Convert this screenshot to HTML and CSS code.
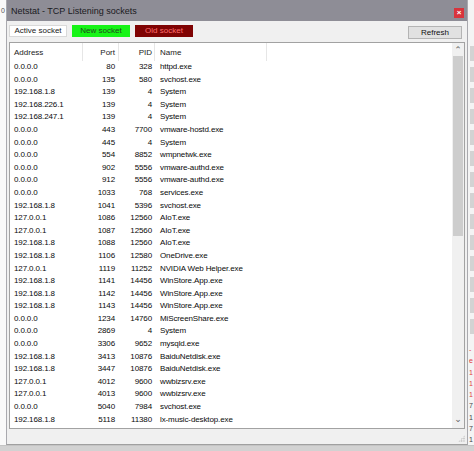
FILE: index.html
```html
<!DOCTYPE html>
<html>
<head>
<meta charset="utf-8">
<link rel="stylesheet" href="styles.css">
</head>
<body>
<div class="screen">
  <div class="desk">
    <div class="left-strip"><span class="peek">0</span></div>
    <div class="window">
      <div class="titlebar">
        <span class="title">Netstat - TCP Listening sockets</span>
        <span class="close">×</span>
      </div>
      <div class="toolbar">
        <span class="tag tag-active">Active socket</span>
        <span class="tag tag-new">New socket</span>
        <span class="tag tag-old">Old socket</span>
        <button class="refresh">Refresh</button>
      </div>
      <div class="list">
        <div class="grid">
          <div class="row head">
            <div class="c addr">Address</div><div class="c port">Port</div><div class="c pid">PID</div><div class="c name">Name</div><div class="c fill"></div>
          </div>
          <div class="row"><div class="c addr">0.0.0.0</div><div class="c port">80</div><div class="c pid">328</div><div class="c name">httpd.exe</div></div>
          <div class="row"><div class="c addr">0.0.0.0</div><div class="c port">135</div><div class="c pid">580</div><div class="c name">svchost.exe</div></div>
          <div class="row"><div class="c addr">192.168.1.8</div><div class="c port">139</div><div class="c pid">4</div><div class="c name">System</div></div>
          <div class="row"><div class="c addr">192.168.226.1</div><div class="c port">139</div><div class="c pid">4</div><div class="c name">System</div></div>
          <div class="row"><div class="c addr">192.168.247.1</div><div class="c port">139</div><div class="c pid">4</div><div class="c name">System</div></div>
          <div class="row"><div class="c addr">0.0.0.0</div><div class="c port">443</div><div class="c pid">7700</div><div class="c name">vmware-hostd.exe</div></div>
          <div class="row"><div class="c addr">0.0.0.0</div><div class="c port">445</div><div class="c pid">4</div><div class="c name">System</div></div>
          <div class="row"><div class="c addr">0.0.0.0</div><div class="c port">554</div><div class="c pid">8852</div><div class="c name">wmpnetwk.exe</div></div>
          <div class="row"><div class="c addr">0.0.0.0</div><div class="c port">902</div><div class="c pid">5556</div><div class="c name">vmware-authd.exe</div></div>
          <div class="row"><div class="c addr">0.0.0.0</div><div class="c port">912</div><div class="c pid">5556</div><div class="c name">vmware-authd.exe</div></div>
          <div class="row"><div class="c addr">0.0.0.0</div><div class="c port">1033</div><div class="c pid">768</div><div class="c name">services.exe</div></div>
          <div class="row"><div class="c addr">192.168.1.8</div><div class="c port">1041</div><div class="c pid">5396</div><div class="c name">svchost.exe</div></div>
          <div class="row"><div class="c addr">127.0.0.1</div><div class="c port">1086</div><div class="c pid">12560</div><div class="c name">AIoT.exe</div></div>
          <div class="row"><div class="c addr">127.0.0.1</div><div class="c port">1087</div><div class="c pid">12560</div><div class="c name">AIoT.exe</div></div>
          <div class="row"><div class="c addr">192.168.1.8</div><div class="c port">1088</div><div class="c pid">12560</div><div class="c name">AIoT.exe</div></div>
          <div class="row"><div class="c addr">192.168.1.8</div><div class="c port">1106</div><div class="c pid">12580</div><div class="c name">OneDrive.exe</div></div>
          <div class="row"><div class="c addr">127.0.0.1</div><div class="c port">1119</div><div class="c pid">11252</div><div class="c name">NVIDIA Web Helper.exe</div></div>
          <div class="row"><div class="c addr">192.168.1.8</div><div class="c port">1141</div><div class="c pid">14456</div><div class="c name">WinStore.App.exe</div></div>
          <div class="row"><div class="c addr">192.168.1.8</div><div class="c port">1142</div><div class="c pid">14456</div><div class="c name">WinStore.App.exe</div></div>
          <div class="row"><div class="c addr">192.168.1.8</div><div class="c port">1143</div><div class="c pid">14456</div><div class="c name">WinStore.App.exe</div></div>
          <div class="row"><div class="c addr">0.0.0.0</div><div class="c port">1234</div><div class="c pid">14760</div><div class="c name">MiScreenShare.exe</div></div>
          <div class="row"><div class="c addr">0.0.0.0</div><div class="c port">2869</div><div class="c pid">4</div><div class="c name">System</div></div>
          <div class="row"><div class="c addr">0.0.0.0</div><div class="c port">3306</div><div class="c pid">9652</div><div class="c name">mysqld.exe</div></div>
          <div class="row"><div class="c addr">192.168.1.8</div><div class="c port">3413</div><div class="c pid">10876</div><div class="c name">BaiduNetdisk.exe</div></div>
          <div class="row"><div class="c addr">192.168.1.8</div><div class="c port">3447</div><div class="c pid">10876</div><div class="c name">BaiduNetdisk.exe</div></div>
          <div class="row"><div class="c addr">127.0.0.1</div><div class="c port">4012</div><div class="c pid">9600</div><div class="c name">wwbizsrv.exe</div></div>
          <div class="row"><div class="c addr">127.0.0.1</div><div class="c port">4013</div><div class="c pid">9600</div><div class="c name">wwbizsrv.exe</div></div>
          <div class="row"><div class="c addr">0.0.0.0</div><div class="c port">5040</div><div class="c pid">7984</div><div class="c name">svchost.exe</div></div>
          <div class="row"><div class="c addr">192.168.1.8</div><div class="c port">5118</div><div class="c pid">11380</div><div class="c name">lx-music-desktop.exe</div></div>
        </div>
        <div class="vscroll">
          <div class="arrow">&#x2303;</div>
          <div class="track"><div class="thumb"></div></div>
          <div class="arrow down">&#x2304;</div>
        </div>
      </div>
      <div class="status"><span class="grip"></span></div>
    </div>
    <div class="right-strip">
      <div class="blocks">
        <span class="blk"></span><span class="blk"></span><span class="blk"></span><span class="blk"></span><span class="blk"></span><span class="blk"></span><span class="blk"></span><span class="blk"></span><span class="blk"></span><span class="blk"></span><span class="blk"></span><span class="blk"></span><span class="blk"></span><span class="blk"></span>
      </div>
      <div class="peek-lines">
        <span class="red">-</span><span class="red">e</span><span class="red">1</span><span class="red">1</span><span class="red">1</span><span class="dark">7</span><span class="dark">1</span><span class="dark">7</span><span class="dark">1</span>
      </div>
    </div>
  </div>
  <div class="bottom-strip"></div>
</div>
</body>
</html>
```

FILE: styles.css
```css
* { box-sizing: border-box; }

html, body {
  margin: 0;
  padding: 0;
}

body {
  width: 474px;
  height: 451px;
  overflow: hidden;
  background: #e3e3e3;
  font-family: "Liberation Sans", Arial, sans-serif;
  color: #000;
}

.screen {
  width: 474px;
  height: 451px;
  display: flex;
  flex-direction: column;
}

.desk {
  display: flex;
  height: 445px;
}

.left-strip {
  width: 6px;
  background: #f9f9f9;
  overflow: hidden;
}

.peek {
  display: block;
  font-size: 7px;
  line-height: 8px;
  margin-top: 7px;
  padding-left: 1px;
  color: #555;
}

.window {
  width: 462px;
  display: flex;
  flex-direction: column;
  background: #f0f0f0;
  border-left: 1px solid #a9a9ae;
  border-right: 1px solid #a9a9ae;
  border-bottom: 1px solid #a0a0a0;
}

.titlebar {
  height: 21px;
  background: #8e8d96;
  display: flex;
  align-items: flex-start;
  padding-left: 4px;
}

.title {
  font-size: 9px;
  line-height: 9px;
  margin-top: 7px;
  color: #1a1a1e;
}

.close {
  margin-left: auto;
  margin-right: 3px;
  margin-top: 8px;
  width: 10px;
  height: 10px;
  background: #d8343c;
  color: #fff;
  font-size: 8px;
  line-height: 10px;
  text-align: center;
  font-weight: bold;
}

.toolbar {
  height: 21px;
  display: flex;
  align-items: flex-start;
  padding-top: 4px;
  padding-left: 2px;
  gap: 5px;
}

.tag {
  width: 58px;
  height: 12px;
  font-size: 8px;
  line-height: 12px;
  text-align: center;
}

.tag-active {
  background: #fff;
  border: 1px solid #d9d9d9;
  line-height: 10px;
  color: #222;
}

.tag-new {
  background: #16f416;
  color: #1f4a1f;
}

.tag-old {
  background: #7f0303;
  color: #ff6e6e;
}

.refresh {
  margin-left: auto;
  margin-right: 5px;
  margin-top: 1px;
  width: 54px;
  height: 13px;
  padding: 0;
  background: #e1e1e1;
  border: 1px solid #b4b4b4;
  font-family: "Liberation Sans", Arial, sans-serif;
  font-size: 8px;
  line-height: 11px;
  color: #111;
}

.list {
  height: 387px;
  margin: 0 2px;
  border: 1px solid #a2a2a2;
  background: #fff;
  display: flex;
  overflow: hidden;
}

.grid {
  flex: 1;
  display: flex;
  flex-direction: column;
}

.row {
  display: flex;
  height: 12.6px;
  line-height: 12.6px;
  font-size: 8px;
  letter-spacing: -0.12px;
  white-space: nowrap;
  color: #0a0a0a;
}

.row.head {
  height: 18px;
  line-height: 19px;
  letter-spacing: 0;
  color: #222;
}

.c { overflow: hidden; }

.addr { width: 73px; padding-left: 4px; }
.port { width: 36px; text-align: right; padding-right: 4px; }
.pid { width: 36px; text-align: right; padding-right: 3px; }
.name { width: 112px; padding-left: 5px; }
.fill { flex: 1; }

.head .addr, .head .port, .head .pid, .head .name {
  border-right: 1px solid #e6e6e6;
}
.head .port { padding-right: 3px; }
.head .pid { padding-right: 2px; }

.vscroll {
  width: 12px;
  background: #f0f0f0;
  display: flex;
  flex-direction: column;
}

.arrow {
  height: 13px;
  font-size: 9px;
  line-height: 14px;
  text-align: center;
  color: #606060;
  font-family: "DejaVu Sans", sans-serif;
}

.arrow.down { line-height: 8px; }

.track {
  flex: 1;
  padding: 0 1px;
}

.thumb {
  height: 180px;
  background: #cdcdcd;
}

.status {
  flex: 1;
  position: relative;
}

.grip {
  position: absolute;
  right: 2px;
  bottom: 2px;
  width: 7px;
  height: 7px;
  background: radial-gradient(circle, #b8b8b8 0.7px, transparent 0.9px) 0 0 / 2.4px 2.4px;
  clip-path: polygon(100% 0, 100% 100%, 0 100%);
}

.right-strip {
  width: 6px;
  background: #f4f4f4;
  overflow: hidden;
  display: flex;
  flex-direction: column;
  padding-top: 46px;
}

.blocks {
  display: flex;
  flex-direction: column;
  gap: 6px;
  padding-left: 2px;
}

.blk {
  display: block;
  height: 15px;
  background: #d3d3d3;
}

.peek-lines {
  display: flex;
  flex-direction: column;
  margin-top: 10px;
  font-size: 7px;
  line-height: 11.3px;
  padding-left: 1px;
  white-space: nowrap;
}

.red { color: #e04040; }
.dark { color: #444; }

.bottom-strip {
  height: 6px;
  background: #d2d2d2;
  border-top: 1px solid #c4c4c4;
}
```
